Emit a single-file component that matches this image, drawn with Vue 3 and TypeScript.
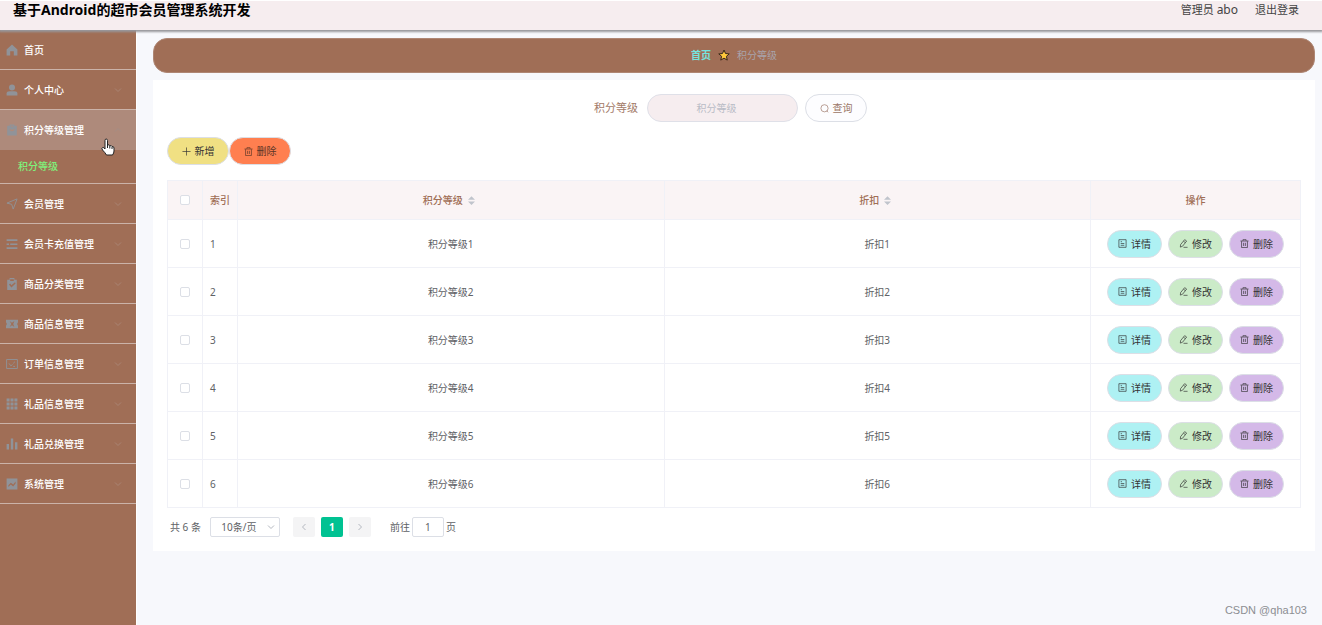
<script setup lang="ts">
import { ref } from 'vue'

interface MenuItem {
  label: string
  icon: string
  open?: boolean
  leaf?: boolean
  children?: string[]
}

const menu: MenuItem[] = [
  { label: '首页', icon: 'home', leaf: true },
  { label: '个人中心', icon: 'user' },
  { label: '积分等级管理', icon: 'case', open: true, children: ['积分等级'] },
  { label: '会员管理', icon: 'send' },
  { label: '会员卡充值管理', icon: 'list' },
  { label: '商品分类管理', icon: 'clip' },
  { label: '商品信息管理', icon: 'ticket' },
  { label: '订单信息管理', icon: 'card' },
  { label: '礼品信息管理', icon: 'grid' },
  { label: '礼品兑换管理', icon: 'bars' },
  { label: '系统管理', icon: 'chart' },
]

const rows = [1, 2, 3, 4, 5, 6].map((n) => ({ id: n, level: `积分等级${n}`, discount: `折扣${n}` }))
const keyword = ref('')
const pageSize = ref('10')
const jump = ref('1')
const checked = ref<number[]>([])
</script>

<template>
  <div class="app">
    <header class="top">
      <h1>基于Android的超市会员管理系统开发</h1>
      <div class="account">
        <span>管理员 <span class="name">abo</span></span>
        <a href="#">退出登录</a>
      </div>
    </header>

    <div class="body">
      <nav class="side">
        <template v-for="m in menu" :key="m.label">
          <a href="#" class="item" :class="{ open: m.open }">
            <svg class="mi" viewBox="0 0 20 20" aria-hidden="true">
              <path v-if="m.icon === 'home'" d="M10 1 1 9v10h6v-7h6v7h6V9z" />
              <g v-else-if="m.icon === 'user'"><circle cx="10" cy="6" r="5" /><path d="M1 19v-3q0-4 5-4h8q5 0 5 4v3z" /></g>
              <path v-else-if="m.icon === 'case'" fill-rule="evenodd" d="M6 3V1h8v2h4v16H2V3zM8 3h4v1H8zM6 8v2q4 4 8 0V8q-4 3-8 0z" />
              <path v-else-if="m.icon === 'send'" class="line" d="M1.500 8.500 18.500 1.500 12 18.500 9.500 10.500z" />
              <path v-else-if="m.icon === 'list'" d="M1 2h18v3H1zM1 9h4v2.500H1zM7 9h12v2.500H7zM1 15.500h18v3H1z" />
              <path v-else-if="m.icon === 'clip'" fill-rule="evenodd" d="M2 3h4V0h8v3h4v17H2zM7 2v3h6V2zM5 11l4 5 7-7-1-2-6 5-2-3z" />
              <path v-else-if="m.icon === 'ticket'" fill-rule="evenodd" d="M0 3h20v4q-3 3 0 6v4H0v-4q3-3 0-6zM6 5l3 5-3 5 4-3 4 3-2-5 2-5-4 3z" />
              <g v-else-if="m.icon === 'card'" class="line"><path d="M1 2.500h18v15H1z" /><path d="m5 9 3 4 3-2M12 9l3-3M12 14h3" /></g>
              <path v-else-if="m.icon === 'grid'" d="M1 1h5v5H1zM7.500 1h5v5h-5zM14 1h5v5h-5zM1 7.500h5v5H1zM7.500 7.500h5v5h-5zM14 7.500h5v5h-5zM1 14h5v5H1zM7.500 14h5v5h-5zM14 14h5v5h-5z" />
              <path v-else-if="m.icon === 'bars'" d="M1 10h4v9H1zM8 1h4v18H8zM15 7h4v12h-4z" />
              <path v-else fill-rule="evenodd" d="M1 1h18v18H1zM4 12l4-4 4 3 4-5v3l-4 5-4-3-4 4z" />
            </svg>
            <span>{{ m.label }}</span>
            <svg v-if="!m.leaf" class="arrow" viewBox="0 0 10 10" aria-hidden="true">
              <path :d="m.open ? 'M2 6.500 5 3.500 8 6.500' : 'M2 3.500 5 6.500 8 3.500'" />
            </svg>
          </a>
          <a v-for="c in m.children" :key="c" href="#" class="sub">{{ c }}</a>
        </template>
      </nav>

      <main>
        <div class="crumb">
          <a href="#">首页</a>
          <svg viewBox="0 0 24 24" aria-hidden="true">
            <path d="m12 2 3 7 7.500.7-5.700 5 1.700 7.500L12 18.300l-6.500 3.900 1.700-7.500-5.700-5L9 9z" />
          </svg>
          <span>积分等级</span>
        </div>

        <section class="panel">
          <form class="search" @submit.prevent>
            <label for="kw">积分等级</label>
            <input id="kw" v-model="keyword" type="text" placeholder="积分等级" />
            <button type="submit" class="btn wide query">
              <svg viewBox="0 0 20 20" aria-hidden="true"><circle cx="10" cy="9.500" r="8" /><path d="m15 15 3 3.500" /></svg>查询
            </button>
          </form>

          <div class="tools">
            <button type="button" class="btn wide add">
              <svg viewBox="0 0 20 20" aria-hidden="true"><path d="M10 1v18M1 10h18" /></svg>新增
            </button>
            <button type="button" class="btn wide remove">
              <svg viewBox="0 0 20 20" aria-hidden="true"><path d="M1 4.500h18M6.500 4V1.500h7V4M3.500 5v14h13V5M8 8.500v7M12 8.500v7" /></svg>删除
            </button>
          </div>

          <table>
            <colgroup>
              <col class="c-small" /><col class="c-small" /><col /><col /><col class="c-act" />
            </colgroup>
            <thead>
              <tr>
                <th><input type="checkbox" aria-label="全选" /></th>
                <th class="idx">索引</th>
                <th class="sortable">积分等级<svg class="sort" viewBox="0 0 8 10" aria-hidden="true"><path d="M4 0 8 4H0zM0 6h8L4 10z" /></svg></th>
                <th class="sortable">折扣<svg class="sort" viewBox="0 0 8 10" aria-hidden="true"><path d="M4 0 8 4H0zM0 6h8L4 10z" /></svg></th>
                <th>操作</th>
              </tr>
            </thead>
            <tbody>
              <tr v-for="r in rows" :key="r.id">
                <td><input v-model="checked" type="checkbox" :value="r.id" :aria-label="r.level" /></td>
                <td class="idx">{{ r.id }}</td>
                <td>{{ r.level }}</td>
                <td>{{ r.discount }}</td>
                <td>
                  <div class="acts">
                    <button type="button" class="btn view">
                      <svg viewBox="0 0 20 20" aria-hidden="true"><path d="M2 1.500h16v17H2zM6 6h3M6 10h8M6 14h8" /></svg>详情
                    </button>
                    <button type="button" class="btn edit">
                      <svg viewBox="0 0 20 20" aria-hidden="true"><path d="M12.500 1.500 17 4.500 8 16l-5 2 .5-5.500zM10 5l4 3M10 18.500h9" /></svg>修改
                    </button>
                    <button type="button" class="btn del">
                      <svg viewBox="0 0 20 20" aria-hidden="true"><path d="M1 4.500h18M6.500 4V1.500h7V4M3.500 5v14h13V5M8 8.500v7M12 8.500v7" /></svg>删除
                    </button>
                  </div>
                </td>
              </tr>
            </tbody>
          </table>

          <div class="pager">
            <span>共 6 条</span>
            <div class="size">
              <select v-model="pageSize" aria-label="每页条数">
                <option value="10">10条/页</option>
                <option value="20">20条/页</option>
              </select>
              <svg viewBox="0 0 10 10" aria-hidden="true"><path d="M2 3.500 5 6.500 8 3.500" /></svg>
            </div>
            <div class="pages">
              <button type="button" aria-label="上一页"><svg viewBox="0 0 10 10" aria-hidden="true"><path d="M6.500 2 3.500 5l3 3" /></svg></button>
              <button type="button" class="current">1</button>
              <button type="button" aria-label="下一页"><svg viewBox="0 0 10 10" aria-hidden="true"><path d="m3.500 2 3 3-3 3" /></svg></button>
            </div>
            <label class="jump">前往<input v-model="jump" type="text" />页</label>
          </div>
        </section>
      </main>
    </div>

    <svg class="pointer" viewBox="0 0 14 18" aria-hidden="true">
      <path d="M4 10V2.500q0-1.500 1.200-1.500t1.300 1.500V7q2-.8 2.300.8 1.900-.7 2.200.8 2-.4 2 1.400v3q0 2-1.500 4H5.500Q4 14.500 1.500 12 .3 10.300 1.500 9.600 2.800 9 4 11z" />
      <path d="M6.500 7v3M8.800 8v2.500M11 9v2" />
    </svg>
    <div class="mark">CSDN @qha103</div>
  </div>
</template>

<style>
body {
  margin: 0;
  background: #f7f8fc;
}
</style>

<style scoped>
.app {
  position: relative;
  display: flex;
  flex-direction: column;
  min-height: 100vh;
  font-family: "Noto Sans", "Noto Sans CJK SC", sans-serif;
  font-size: 10px;
  line-height: 16px;
  color: #606266;
}
* {
  box-sizing: border-box;
}
a {
  color: inherit;
  text-decoration: none;
}
button,
input,
select {
  font: inherit;
  color: inherit;
  margin: 0;
}
svg {
  flex: none;
}
.top {
  position: relative;
  z-index: 1;
  height: 30px;
  padding: 0 23px 11px 13px;
  display: flex;
  align-items: center;
  justify-content: space-between;
  background: #f6edef;
  border-top: 1px solid #fff;
  box-shadow: 0 1px 2px 1px #98989c;
}
h1 {
  margin: 0;
  font-size: 14px;
  line-height: 18px;
  color: #000;
}
.account {
  display: flex;
  gap: 17px;
  font-size: 11px;
  color: #444;
}
.name {
  font-size: 12px;
}
.body {
  flex: 1;
  display: flex;
}
.side {
  width: 137px;
  flex: none;
  background: #a06e56;
  border-right: 1px solid #fff;
}
.item {
  display: flex;
  align-items: center;
  height: 40px;
  padding: 0 13px 0 6px;
  border-bottom: 1px solid #cbb3a9;
  color: #fff;
  font-weight: 500;
}
.item.open {
  background: #ae8a7b;
  border-bottom-color: #ae8a7b;
}
.mi {
  width: 12px;
  height: 12px;
  margin-right: 6px;
  fill: #909399;
}
.mi .line {
  fill: none;
  stroke: #909399;
  stroke-width: 1.5;
}
.arrow {
  width: 10px;
  height: 10px;
  margin-left: auto;
  fill: none;
  stroke: #aa8473;
}
.open .arrow {
  stroke: #a48e86;
}
.sub {
  display: block;
  height: 34px;
  padding-left: 18px;
  line-height: 32px;
  border-bottom: 1px solid #cbb3a9;
  color: #7ff07a;
  font-weight: 500;
}
main {
  flex: 1;
  min-width: 0;
  padding: 8px 7px 0 16px;
}
.crumb {
  height: 35px;
  padding-bottom: 1px;
  display: flex;
  align-items: center;
  justify-content: center;
  gap: 7px;
  border: 1px solid #ae8674;
  border-radius: 14px;
  background: #a06e56;
  color: #a9a3ab;
}
.crumb a {
  color: #76e4e0;
  font-weight: 700;
}
.crumb svg {
  width: 12px;
  height: 12px;
  fill: #ffc93c;
  stroke: #3a2a1c;
  stroke-width: 2;
}
.panel {
  margin-top: 7px;
  padding: 14px;
  background: #fff;
}
.search {
  display: flex;
  align-items: center;
  justify-content: center;
  padding-right: 7px;
}
.search label {
  margin-right: 9px;
  font-size: 11px;
  color: #a37a68;
}
.search input {
  width: 151px;
  height: 28px;
  margin-right: 7px;
  padding: 0 12px 0 0;
  border: 1px solid #dfe0e8;
  border-radius: 14px;
  background: #f6edef;
  text-align: center;
  outline: none;
}
.search input::placeholder {
  color: #b9bcc6;
}
.btn {
  height: 28px;
  min-width: 55px;
  padding: 0;
  display: inline-flex;
  align-items: center;
  justify-content: center;
  gap: 4px;
  border: 1px solid #dcdfe6;
  border-radius: 14px;
  color: #333;
}
.btn svg {
  width: 9px;
  height: 9px;
  fill: none;
  stroke: currentColor;
  stroke-width: 1.5;
}
.btn.wide {
  min-width: 62px;
}
.query {
  background: #fdfdff;
  color: #9b7565;
}
.add {
  background: #f0e083;
}
.remove {
  background: #ff7f50;
  color: #5a3527;
}
.view {
  background: #aef1f3;
}
.edit {
  background: #cbebc8;
}
.del {
  background: #d4b9e8;
}
.tools {
  display: flex;
  margin: 15px 0;
}
table {
  width: 100%;
  table-layout: fixed;
  border-collapse: separate;
  border-spacing: 0;
  border-top: 1px solid #f0f1f7;
  border-left: 1px solid #f0f1f7;
}
.c-small {
  width: 35px;
}
.c-act {
  width: 210px;
}
th,
td {
  padding: 0;
  border-right: 1px solid #f0f1f7;
  border-bottom: 1px solid #f0f1f7;
  text-align: center;
  vertical-align: middle;
}
th {
  height: 39px;
  background: #faf4f5;
  color: #a06e56;
  font-weight: 500;
}
td {
  height: 48px;
}
th.sortable {
  padding-right: 4px;
}
.idx {
  padding-left: 7px;
  text-align: left;
}
input[type="checkbox"] {
  appearance: none;
  display: block;
  width: 10px;
  height: 10px;
  margin: 0 auto;
  border: 1px solid #dcdfe6;
  border-radius: 2px;
  background: #fff;
}
.sort {
  width: 7px;
  height: 9px;
  margin-left: 5px;
  vertical-align: -1px;
  fill: #c0c4cc;
}
.acts {
  display: flex;
  justify-content: center;
  gap: 6px;
}
.pager {
  display: flex;
  align-items: center;
  margin-top: 9px;
  padding-left: 3px;
}
.size {
  position: relative;
  width: 70px;
  margin: 0 13px 0 9px;
}
.size select {
  appearance: none;
  display: block;
  width: 100%;
  height: 20px;
  padding: 0 12px 0 0;
  border: 1px solid #dcdfe6;
  border-radius: 2px;
  background: #fff;
  text-align: center;
  text-align-last: center;
}
.size svg {
  position: absolute;
  right: 4px;
  top: 5px;
}
.size svg,
.pages svg {
  width: 10px;
  height: 10px;
  fill: none;
  stroke: #b4b8c0;
}
.pages {
  display: flex;
  gap: 6px;
  margin-right: 19px;
}
.pages button {
  width: 22px;
  height: 20px;
  padding: 0;
  display: flex;
  align-items: center;
  justify-content: center;
  border: 0;
  border-radius: 2px;
  background: #f4f4f5;
}
.pages .current {
  background: #00c292;
  color: #fff;
  font-weight: 700;
}
.jump {
  display: flex;
  align-items: center;
  gap: 2px;
}
.jump input {
  width: 32px;
  height: 20px;
  padding: 0;
  border: 1px solid #dcdfe6;
  border-radius: 2px;
  background: #fff;
  text-align: center;
}
.pointer {
  position: absolute;
  z-index: 2;
  left: 101px;
  top: 138px;
  width: 14px;
  height: 18px;
  fill: #fff;
  stroke: #222;
}
.mark {
  position: absolute;
  right: 15px;
  bottom: 7px;
  font-family: "Liberation Sans", sans-serif;
  font-size: 11px;
  color: #8c8e92;
}
</style>
